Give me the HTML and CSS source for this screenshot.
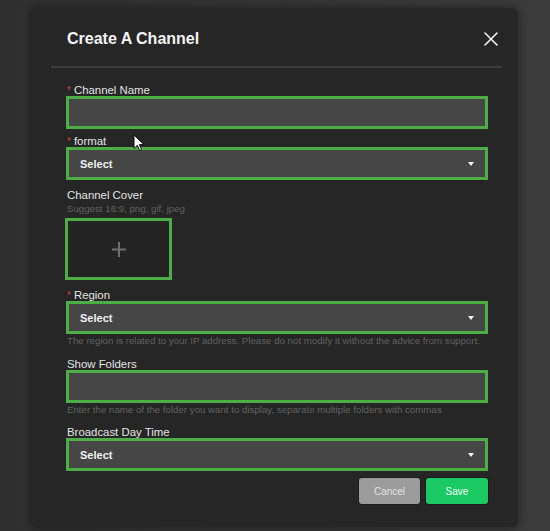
FILE: index.html
```html
<!DOCTYPE html>
<html>
<head>
<meta charset="utf-8">
<link rel="stylesheet" href="styles.css">
</head>
<body>
<div class="page">
  <div class="modal">
    <div class="modal-header">
      <h2 class="title">Create A Channel</h2>
      <button class="close" aria-label="Close">
        <svg width="14" height="14" viewBox="0 0 14 14"><path d="M1 1L13 13M13 1L1 13" stroke="#f2f2f2" stroke-width="1.6" fill="none" stroke-linecap="round"/></svg>
      </button>
    </div>
    <div class="modal-body">
      <div class="item gap-5">
        <div class="label"><span class="req">*</span>Channel Name</div>
        <div class="control"></div>
      </div>
      <div class="item gap-8">
        <div class="label"><span class="req">*</span>format</div>
        <div class="control select"><span class="value">Select</span><span class="arrow"></span></div>
      </div>
      <div class="item gap-8">
        <div class="label">Channel Cover</div>
        <div class="hint">Suggest 16:9, png, gif, jpeg</div>
        <div class="upload">
          <svg width="14" height="15" viewBox="0 0 14 15"><path d="M7 0V15M0 7.5H14" stroke="#6f6f6f" stroke-width="2" fill="none"/></svg>
        </div>
      </div>
      <div class="item gap-10">
        <div class="label"><span class="req">*</span>Region</div>
        <div class="control select"><span class="value">Select</span><span class="arrow"></span></div>
        <div class="help">The region is related to your IP address. Please do not modify it without the advice from support.</div>
      </div>
      <div class="item gap-9">
        <div class="label">Show Folders</div>
        <div class="control"></div>
        <div class="help">Enter the name of the folder you want to display, separate multiple folders with commas</div>
      </div>
      <div class="item gap-7">
        <div class="label">Broadcast Day Time</div>
        <div class="control select"><span class="value">Select</span><span class="arrow"></span></div>
      </div>
      <div class="footer">
        <button class="btn btn-cancel">Cancel</button>
        <button class="btn btn-save">Save</button>
      </div>
    </div>
  </div>
</div>
<svg class="cursor" width="12" height="18" viewBox="0 0 12 18"><path d="M1 1V14.5L4.3 11.4L6.6 16.6L8.6 15.7L6.4 10.6H10.8Z" fill="#fff" stroke="#111" stroke-width="1" stroke-linejoin="round"/></svg>
</body>
</html>
```

FILE: styles.css
```css
* { box-sizing: border-box; }
html, body { margin: 0; padding: 0; }
body {
  width: 550px;
  height: 531px;
  overflow: hidden;
  background: linear-gradient(90deg, #2f2f2f 0%, #343434 40%, #3b3b3b 100%);
  font-family: "Liberation Sans", Arial, sans-serif;
  position: relative;
}
.page {
  padding: 8px 32px 0 31px;
}
.modal {
  width: 487px;
  height: 519px;
  background: #262626;
  border-radius: 6px;
  box-shadow: 0 0 10px rgba(0, 0, 0, 0.45);
}
.modal-header {
  height: 60px;
  margin: 0 16px 0 20px;
  border-bottom: 2px solid #3c3c3c;
  display: flex;
  align-items: center;
  justify-content: space-between;
  padding: 3px 4px 0 16px;
}
.title {
  margin: 0;
  font-size: 16px;
  font-weight: bold;
  color: #f4f4f4;
  line-height: 20px;
}
.close {
  background: none;
  border: 0;
  padding: 0;
  width: 14px;
  height: 14px;
  display: flex;
}
.modal-body {
  padding: 15px 30px 0 35px;
}
.item { display: flex; flex-direction: column; }
.gap-5 { margin-bottom: 5px; }
.gap-7 { margin-bottom: 7px; }
.gap-8 { margin-bottom: 8px; }
.gap-9 { margin-bottom: 9px; }
.gap-10 { margin-bottom: 10px; }
.label {
  font-size: 11.4px;
  line-height: 13px;
  height: 13px;
  color: #e4e4e4;
  padding-left: 1px;
  padding-top: 1px;
}
.req {
  color: #c8443c;
  margin-right: 3px;
  font-size: 10px;
}
.control {
  height: 33px;
  border: 3px solid #4ead46;
  background: #464646;
}
.select {
  display: flex;
  align-items: center;
  justify-content: space-between;
  padding: 0 11px 0 11px;
}
.value {
  font-size: 11px;
  font-weight: bold;
  color: #f0f0f0;
}
.arrow {
  width: 0;
  height: 0;
  border-left: 3.5px solid transparent;
  border-right: 3.5px solid transparent;
  border-top: 4.5px solid #f4f4f4;
}
.hint {
  font-size: 9.7px;
  line-height: 14px;
  color: #616161;
  margin: 1px 0 2px 1px;
}
.upload {
  width: 107px;
  height: 62px;
  margin-left: -1px;
  border: 3px solid #4ead46;
  background: #242424;
  display: flex;
  align-items: center;
  justify-content: center;
}
.help {
  font-size: 9.7px;
  line-height: 13px;
  color: #616161;
  padding-left: 1px;
  white-space: nowrap;
}
.footer {
  display: flex;
  justify-content: flex-end;
  gap: 6px;
}
.btn {
  height: 26px;
  width: 61px;
  border: 0;
  border-radius: 3px;
  font-family: "Liberation Sans", Arial, sans-serif;
  font-size: 10px;
  padding: 0;
  box-shadow: 0 0 0 1px #1c1c1c;
}
.btn-cancel { background: #9b9b9b; color: #e2e2e2; }
.btn-save { background: #1bc964; color: #f4fff8; width: 62px; }
.cursor {
  position: absolute;
  left: 133px;
  top: 134px;
}
```
